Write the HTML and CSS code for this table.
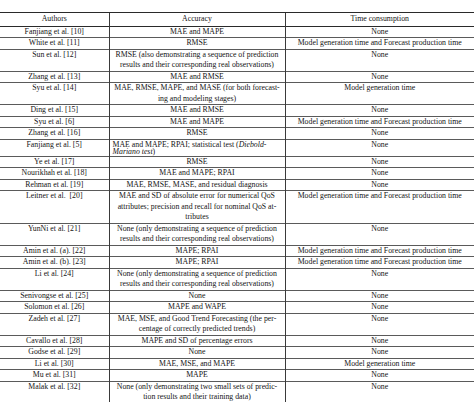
FILE: index.html
```html
<!DOCTYPE html>
<html>
<head>
<meta charset="utf-8">
<link rel="stylesheet" href="styles.css">
</head>
<body>
<div class="page">
<table class="tbl">
<colgroup><col class="w1"><col class="w2"><col class="w3"></colgroup>
<thead>
<tr class="head"><th>Authors</th><th>Accuracy</th><th>Time consumption</th></tr>
</thead>
<tbody>
<tr><td>Fanjiang et al. [10]</td><td>MAE and MAPE</td><td>None</td></tr>
<tr><td>White et al. [11]</td><td>RMSE</td><td>Model generation time and Forecast production time</td></tr>
<tr><td>Sun et al. [12]</td><td>RMSE (also demonstrating a sequence of prediction<br>results and their corresponding real observations)</td><td>None</td></tr>
<tr><td>Zhang et al. [13]</td><td>MAE and RMSE</td><td>None</td></tr>
<tr><td>Syu et al. [14]</td><td>MAE, RMSE, MAPE, and MASE (for both forecast-<br>ing and modeling stages)</td><td>Model generation time</td></tr>
<tr><td>Ding et al. [15]</td><td>MAE and RMSE</td><td>None</td></tr>
<tr><td>Syu et al. [6]</td><td>MAE and MAPE</td><td>Model generation time and Forecast production time</td></tr>
<tr><td>Zhang et al. [16]</td><td>RMSE</td><td>None</td></tr>
<tr><td>Fanjiang et al. [5]</td><td class="tight">MAE and MAPE; RPAI; statistical test (<i>Diebold-</i><br><i>Mariano test</i>)</td><td>None</td></tr>
<tr><td>Ye et al. [17]</td><td>RMSE</td><td>None</td></tr>
<tr><td>Nourikhah et al. [18]</td><td>MAE and MAPE; RPAI</td><td>None</td></tr>
<tr><td>Rehman et al. [19]</td><td>MAE, RMSE, MASE, and residual diagnosis</td><td>None</td></tr>
<tr><td>Leitner et al.&nbsp; [20]</td><td>MAE and SD of absolute error for numerical QoS<br>attributes; precision and recall for nominal QoS at-<br>tributes</td><td>Model generation time and Forecast production time</td></tr>
<tr><td>YunNi et al. [21]</td><td>None (only demonstrating a sequence of prediction<br>results and their corresponding real observations)</td><td>None</td></tr>
<tr><td>Amin et al. (a). [22]</td><td>MAPE; RPAI</td><td>Model generation time and Forecast production time</td></tr>
<tr><td>Amin et al. (b). [23]</td><td>MAPE; RPAI</td><td>Model generation time and Forecast production time</td></tr>
<tr><td>Li et al. [24]</td><td>None (only demonstrating a sequence of prediction<br>results and their corresponding real observations)</td><td>None</td></tr>
<tr><td>Senivongse et al. [25]</td><td>None</td><td>None</td></tr>
<tr><td>Solomon et al. [26]</td><td>MAPE and WAPE</td><td>None</td></tr>
<tr><td>Zadeh et al. [27]</td><td>MAE, MSE, and Good Trend Forecasting (the per-<br>centage of correctly predicted trends)</td><td>None</td></tr>
<tr><td>Cavallo et al. [28]</td><td>MAPE and SD of percentage errors</td><td>None</td></tr>
<tr><td>Godse et al. [29]</td><td>None</td><td>None</td></tr>
<tr><td>Li et al. [30]</td><td>MAE, MSE, and MAPE</td><td>Model generation time</td></tr>
<tr><td>Mu et al. [31]</td><td>MAPE</td><td>None</td></tr>
<tr><td>Malak et al. [32]</td><td>None (only demonstrating two small sets of predic-<br>tion results and their training data)</td><td>None</td></tr>
</tbody>
</table>
</div>
</body>
</html>
```

FILE: styles.css
```css
html, body {
  margin: 0;
  padding: 0;
  background: #ffffff;
}

.page {
  padding-top: 12px;
}

.tbl {
  border-collapse: collapse;
  table-layout: fixed;
  width: 474px;
  font-family: "Liberation Serif", "Times New Roman", serif;
  font-size: 7.8px;
  line-height: 10.5px;
  color: #141414;
}

.w1 { width: 109px; }
.w2 { width: 176px; }
.w3 { width: 189px; }

.tbl th,
.tbl td {
  padding: 0 1px;
  text-align: center;
  vertical-align: top;
  white-space: nowrap;
  overflow: hidden;
  font-weight: normal;
  border-top: 1px solid #5a5a5a;
}

.tbl th + th,
.tbl td + td {
  border-left: 1px solid #3a3a3a;
}

.tbl .head th {
  border-top: 1px solid #2a2a2a;
  padding: 1px 1px 1px;
}

.tbl tbody tr:first-child td {
  border-top: 1px solid #2a2a2a;
}

.tbl td.tight {
  text-align: left;
  line-height: 7.5px;
  padding: 1px 3px 0;
}
```
